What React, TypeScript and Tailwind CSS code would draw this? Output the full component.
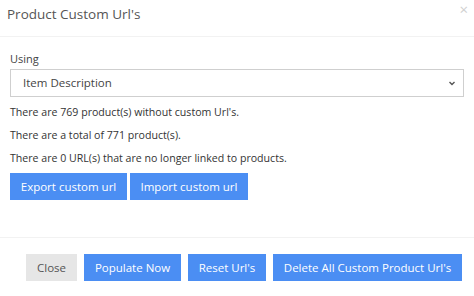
import React from 'react';

const font = { fontFamily: '"Open Sans", "Noto Sans", sans-serif' };

const BlueButton: React.FC<{ label: string; className?: string }> = ({ label, className = '' }) => (
  <button className={`h-[27px] bg-[#4b8ef3] text-white text-[11.5px] ${className}`}>{label}</button>
);

export default function App() {
  return (
    <div className="w-[474px] h-[296px] bg-white flex flex-col text-[#333]" style={font}>
      <header className="h-[37px] border-b border-[#f2f2f2] flex items-start justify-between pl-[7px] pr-[6px] shrink-0">
        <h1 className="text-[13.5px] text-[#555] leading-none mt-[8px]">Product Custom Url's</h1>
        <button className="text-[#d0d0d0] text-[15px] leading-[16px] mt-[1px]">×</button>
      </header>

      <div className="flex-1 px-[10px] pt-[16px]">
        <label className="block text-[11px] leading-none text-[#444]">Using</label>
        <div className="mt-[5px] h-[28px] border border-[#cfcfcf] flex items-center justify-between pl-[12px] pr-[6px]">
          <span className="text-[11.5px] text-[#444]">Item Description</span>
          <svg width="10" height="10" viewBox="0 0 10 10" fill="none" stroke="#555" strokeWidth="1.4">
            <path d="M2.5 4l2.5 2.5L7.5 4" />
          </svg>
        </div>
        <div className="mt-[8px] flex flex-col gap-[9px] text-[10.6px] leading-[14px]">
          <p>There are 769 product(s) without custom Url's.</p>
          <p>There are a total of 771 product(s).</p>
          <p>There are 0 URL(s) that are no longer linked to products.</p>
        </div>
        <div className="mt-[8px] flex gap-[3px]">
          <BlueButton label="Export custom url" className="w-[117px]" />
          <BlueButton label="Import custom url" className="w-[118px]" />
        </div>
      </div>

      <footer className="h-[59px] border-t border-[#f2f2f2] flex items-start justify-end gap-[7px] pr-[12px] pt-[16px] shrink-0">
        <button className="h-[27px] w-[51px] bg-[#e6e6e6] text-[#555] text-[11.5px]">Close</button>
        <BlueButton label="Populate Now" className="w-[97px]" />
        <BlueButton label="Reset Url's" className="w-[78px]" />
        <BlueButton label="Delete All Custom Product Url's" className="w-[189px]" />
      </footer>
    </div>
  );
}
